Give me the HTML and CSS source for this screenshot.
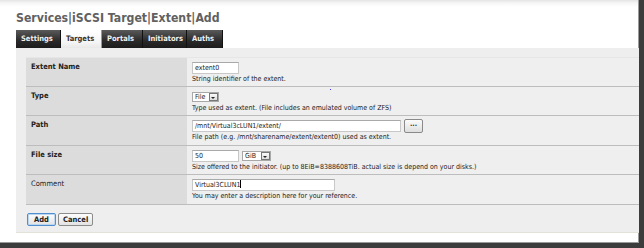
FILE: index.html
```html
<!DOCTYPE html>
<html>
<head>
<meta charset="utf-8">
<link rel="stylesheet" href="styles.css">
</head>
<body>
<div class="frame">
  <h1 class="title">Services|iSCSI Target|Extent|Add</h1>
  <ul class="tabs">
    <li class="tab">Settings</li>
    <li class="tab active">Targets</li>
    <li class="tab">Portals</li>
    <li class="tab">Initiators</li>
    <li class="tab">Auths</li>
  </ul>
  <div class="panel">
    <table class="form">
      <tr class="r1">
        <td class="label bold">Extent Name</td>
        <td class="value">
          <div class="field"><span class="input short">extent0</span></div>
          <div class="desc">String identifier of the extent.</div>
        </td>
      </tr>
      <tr class="r2">
        <td class="label bold">Type</td>
        <td class="value">
          <div class="field"><span class="select"><span class="opt">File</span><span class="arrow"><i></i></span></span><span class="dot"></span></div>
          <div class="desc">Type used as extent. (File includes an emulated volume of ZFS)</div>
        </td>
      </tr>
      <tr class="r3">
        <td class="label bold">Path</td>
        <td class="value">
          <div class="field"><span class="input long">/mnt/Virtual3cLUN1/extent/</span><span class="browse">...</span></div>
          <div class="desc">File path (e.g. /mnt/sharename/extent/extent0) used as extent.</div>
        </td>
      </tr>
      <tr class="r4">
        <td class="label bold">File size</td>
        <td class="value">
          <div class="field"><span class="input short">50</span><span class="select gib"><span class="opt">GiB</span><span class="arrow"><i></i></span></span></div>
          <div class="desc">Size offered to the initiator. (up to 8EiB=8388608TiB. actual size is depend on your disks.)</div>
        </td>
      </tr>
      <tr class="r5">
        <td class="label">Comment</td>
        <td class="value">
          <div class="field"><span class="input mid">Virtual3CLUN1<span class="caret"></span></span></div>
          <div class="desc">You may enter a description here for your reference.</div>
        </td>
      </tr>
    </table>
    <div class="buttons">
      <span class="btn focus">Add</span>
      <span class="btn">Cancel</span>
    </div>
  </div>
</div>
</body>
</html>
```
FILE: styles.css
```css
html, body {
  margin: 0;
  padding: 0;
  background: #ffffff;
  width: 644px;
  height: 248px;
  overflow: hidden;
  font-family: "DejaVu Sans Condensed", "DejaVu Sans", sans-serif;
}
.frame {
  box-sizing: border-box;
  width: 644px;
  height: 248px;
  background: linear-gradient(#e4e4e4 0, #f6f6f6 3px, #ffffff 7px);
  border-right: 5px solid #3c3c3c;
  border-bottom: 5px solid #3c3c3c;
  box-shadow: inset -1px -1px 0 #9a9a9a;
  padding-top: 11px;
  padding-left: 16px;
}
.title {
  margin: 0;
  font-size: 12.2px;
  line-height: 14px;
  font-weight: bold;
  color: #616161;
  height: 19px;
}
.tabs {
  list-style: none;
  margin: 0;
  padding: 0;
  display: flex;
  height: 18px;
}
.tab {
  box-sizing: border-box;
  height: 18px;
  padding: 0 5px;
  font-size: 7.5px;
  font-weight: bold;
  line-height: 18px;
  color: #f0f0f0;
  background: linear-gradient(#5a5a5a, #2a2a2a 60%, #1c1c1c);
  border-right: 1px solid #111;
}
.tab:nth-child(1) { width: 45px; }
.tab:nth-child(2) { width: 41px; }
.tab:nth-child(3) { width: 41px; }
.tab:nth-child(4) { width: 44px; }
.tab:nth-child(5) { width: 36px; }
.tab.active {
  color: #333;
  background: linear-gradient(#ffffff, #f4f4f4 70%, #e8e8e8);
  border-right: 1px solid #999;
}
.panel {
  box-sizing: border-box;
  height: 185px;
  background: #eeeeee;
  border-bottom: 1px solid #e2e2d8;
  padding: 9px 0 0 10px;
}
.form {
  border-collapse: collapse;
  width: 613px;
}
.form td {
  padding: 0;
  vertical-align: top;
  border-bottom: 1px solid #bdbdbd;
}
.form tr.r1 td { border-top: 1px solid #e6e6e6; }
.label {
  width: 156px;
  background: #dcdcdc;
  padding: 4px 0 0 5px !important;
  font-size: 7.5px;
  line-height: 9px;
  color: #222;
}
.label.bold { font-weight: bold; }
.value {
  background: #efefef;
  padding: 3px 0 0 5px !important;
}
.r1 td { height: 24px; }
.r2 td { height: 24px; }
.r3 td { height: 25px; }
.r4 td { height: 24px; }
.r5 td { height: 25px; }
.field {
  display: flex;
  align-items: center;
  gap: 3px;
  height: 14px;
}
.input {
  box-sizing: border-box;
  display: inline-block;
  height: 12px;
  background: #fff;
  border: 1px solid #c8c8c8;
  border-top-color: #a9a9a9;
  font-size: 7px;
  line-height: 10px;
  padding-left: 2px;
  color: #222;
  white-space: nowrap;
}
.short { width: 47px; }
.long { width: 209px; }
.mid { width: 143px; }
.caret {
  display: inline-block;
  width: 1px;
  height: 8px;
  background: #000;
  vertical-align: -1px;
}
.select {
  box-sizing: border-box;
  display: inline-flex;
  align-items: center;
  height: 10px;
  background: #fff;
  border: 1px solid #a8a8a8;
  font-size: 7px;
  line-height: 8px;
  color: #222;
}
.select .opt { padding: 0 3px 0 2px; }
.gib .opt { padding-right: 5px; }
.arrow {
  box-sizing: border-box;
  width: 9px;
  height: 8px;
  border: 1px solid #777;
  background: linear-gradient(#fafafa, #dcdcdc);
  display: flex;
  align-items: center;
  justify-content: center;
}
.arrow i {
  display: block;
  width: 0;
  height: 0;
  border-left: 2px solid transparent;
  border-right: 2px solid transparent;
  border-top: 2px solid #222;
  margin-top: 1px;
}
.dot {
  display: inline-block;
  width: 1px;
  height: 1px;
  background: #3a3aff;
  margin-left: 108px;
  align-self: flex-start;
  margin-top: -1px;
}
.browse {
  box-sizing: border-box;
  width: 19px;
  height: 14px;
  border: 1px solid #8a8a8a;
  border-radius: 2px;
  background: linear-gradient(#fbfbfb, #dedede);
  font-size: 7px;
  line-height: 9px;
  text-align: center;
  font-weight: bold;
  color: #333;
}
.desc {
  font-size: 7px;
  line-height: 9px;
  color: #222;
  white-space: nowrap;
}
.buttons {
  display: flex;
  gap: 2px;
  margin-top: 8px;
  padding-left: 1px;
}
.btn {
  box-sizing: border-box;
  height: 13px;
  padding: 0 4px;
  border: 1px solid #8c8c8c;
  border-radius: 2px;
  background: linear-gradient(#fdfdfd, #e2e2e2);
  font-size: 7.5px;
  font-weight: bold;
  line-height: 11px;
  color: #222;
}
.btn.focus {
  border-color: #4f8ed0;
  box-shadow: inset 0 0 0 1px #bcd6f0;
  width: 29px;
  text-align: center;
}
```
